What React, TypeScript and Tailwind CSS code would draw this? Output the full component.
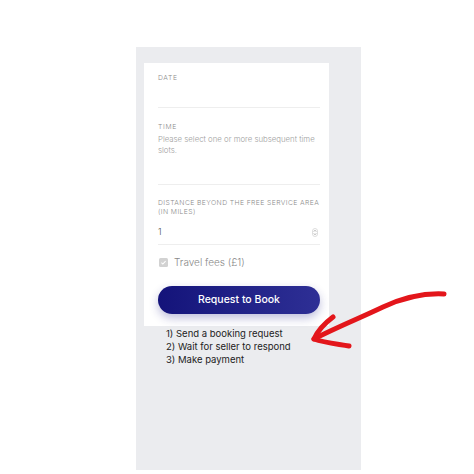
export default function App() {
  return (
    <div className="relative h-[474px] w-[474px] overflow-hidden bg-white" style={{ fontFamily: 'Inter, "Noto Sans", sans-serif' }}>
      <div className="pl-[136px] pt-[47px]">
        <div className="h-[423px] w-[225px] bg-[#ebecef] px-2 pt-4">
          {/* booking card */}
          <div className="w-[185px] bg-white pb-3 pl-[14px] pr-[9px] pt-[10px]">
            <p className="text-[6.8px] font-light tracking-[0.1em] text-[#8a8a8a]">DATE</p>
            <div className="mt-[24px] h-px bg-[#eeeeee]" />

            <p className="mt-[14px] text-[6.8px] font-light tracking-[0.1em] text-[#8a8a8a]">TIME</p>
            <p className="mt-[2px] text-[7.8px] font-light leading-[11px] text-[#a0a0a0]">
              Please select one or more subsequent time slots.
            </p>
            <div className="mt-[28px] h-px bg-[#eeeeee]" />

            <p className="mt-[13px] text-[6.8px] font-light leading-[9px] tracking-[0.06em] text-[#8a8a8a]">
              DISTANCE BEYOND THE FREE SERVICE AREA (IN MILES)
            </p>
            <div className="mt-[9px] flex items-center justify-between pr-[2px]">
              <span className="text-[9px] font-light text-[#555]">1</span>
              <svg width="6" height="9" viewBox="0 0 6 9" className="text-[#888]">
                <rect x="0.5" y="0.5" width="5" height="8" rx="2.5" fill="none" stroke="#c8c8c8" strokeWidth="0.6" />
                <path d="M1.8 3.6L3 2.3L4.2 3.6M1.8 5.4L3 6.7L4.2 5.4" fill="none" stroke="currentColor" strokeWidth="0.7" />
              </svg>
            </div>
            <div className="mt-[5px] h-px bg-[#eeeeee]" />

            <div className="mt-[10px] flex items-center gap-[6px] pl-[1px]">
              <span className="flex h-[9px] w-[9px] items-center justify-center rounded-[1.5px] bg-[#d2d2d2]">
                <svg width="7" height="7" viewBox="0 0 8 8">
                  <path d="M1.6 4.2L3.2 5.8L6.4 2.4" fill="none" stroke="white" strokeWidth="1.2" />
                </svg>
              </span>
              <span className="text-[10px] font-light text-[#888]">Travel fees (£1)</span>
            </div>

            <button className="mt-[16px] flex h-[28px] w-full items-center justify-center rounded-full bg-gradient-to-r from-[#14137a] to-[#2e2f95] text-[10.5px] font-medium text-white shadow-[0_4px_10px_rgba(40,40,140,0.3)]">
              Request to Book
            </button>
          </div>

          <div className="pl-[22px] pt-[1px] text-[9.5px] leading-[13px] text-[#222]">
            <p>1) Send a booking request</p>
            <p>2) Wait for seller to respond</p>
            <p>3) Make payment</p>
          </div>
        </div>
      </div>

      {/* red hand-drawn arrow */}
      <svg className="absolute left-0 top-0" width="474" height="474" viewBox="0 0 474 474">
        <path
          d="M444 294 C425 293 405 297 383 307 C360 318 335 328 314 339"
          fill="none"
          stroke="#e3161b"
          strokeWidth="5"
          strokeLinecap="round"
        />
        <path
          d="M333 317 C325 323 318 330 314 339 C325 343 338 344 349 346"
          fill="none"
          stroke="#e3161b"
          strokeWidth="5"
          strokeLinecap="round"
          strokeLinejoin="round"
        />
      </svg>
    </div>
  );
}
